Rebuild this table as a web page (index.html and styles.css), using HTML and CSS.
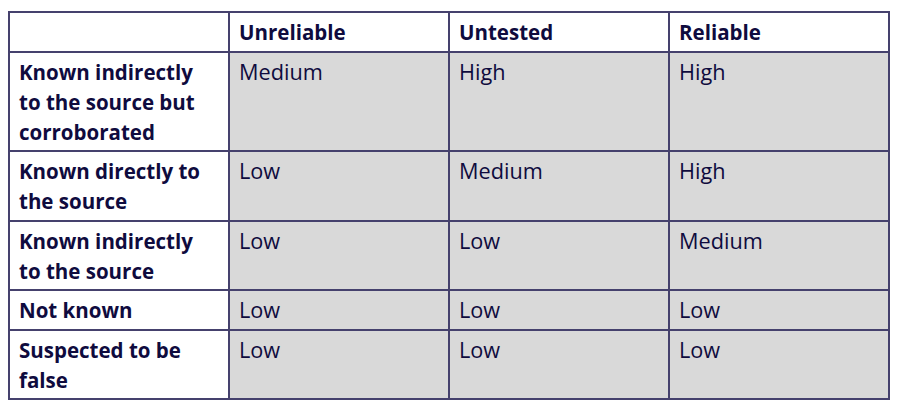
FILE: index.html
```html
<!DOCTYPE html>
<html>
<head>
<meta charset="utf-8">
<link rel="stylesheet" href="styles.css">
</head>
<body>
<table class="grid">
  <colgroup>
    <col class="c"><col class="c"><col class="c"><col class="c">
  </colgroup>
  <tr class="head">
    <th class="corner"></th>
    <th>Unreliable</th>
    <th>Untested</th>
    <th>Reliable</th>
  </tr>
  <tr>
    <th>Known indirectly<br>to the source but<br>corroborated</th>
    <td>Medium</td><td>High</td><td>High</td>
  </tr>
  <tr>
    <th>Known directly to<br>the source</th>
    <td>Low</td><td>Medium</td><td>High</td>
  </tr>
  <tr>
    <th>Known indirectly<br>to the source</th>
    <td>Low</td><td>Low</td><td>Medium</td>
  </tr>
  <tr>
    <th>Not known</th>
    <td>Low</td><td>Low</td><td>Low</td>
  </tr>
  <tr>
    <th>Suspected to be<br>false</th>
    <td>Low</td><td>Low</td><td>Low</td>
  </tr>
</table>
</body>
</html>
```
FILE: styles.css
```css
html, body {
  margin: 0;
  padding: 0;
  background: #ffffff;
}
body {
  padding: 11px 0 0 8px;
  font-family: "Open Sans", "Liberation Sans", sans-serif;
  color: #0f0b3e;
}
.grid {
  border-collapse: collapse;
  table-layout: fixed;
  width: 882px;
}
.grid col.c {
  width: 220px;
}
.grid th, .grid td {
  border: 2px solid #45416d;
  padding: 4px 9px 3.5px 9px;
  text-align: left;
  vertical-align: top;
  line-height: 30px;
  white-space: nowrap;
  overflow: hidden;
}
.grid th {
  font-weight: 700;
  font-size: 20.5px;
  background: #ffffff;
}
.grid td {
  font-weight: 400;
  font-size: 21.7px;
  background: #d9d9d9;
}
.grid tr.head th {
  height: 30px;
}
```
